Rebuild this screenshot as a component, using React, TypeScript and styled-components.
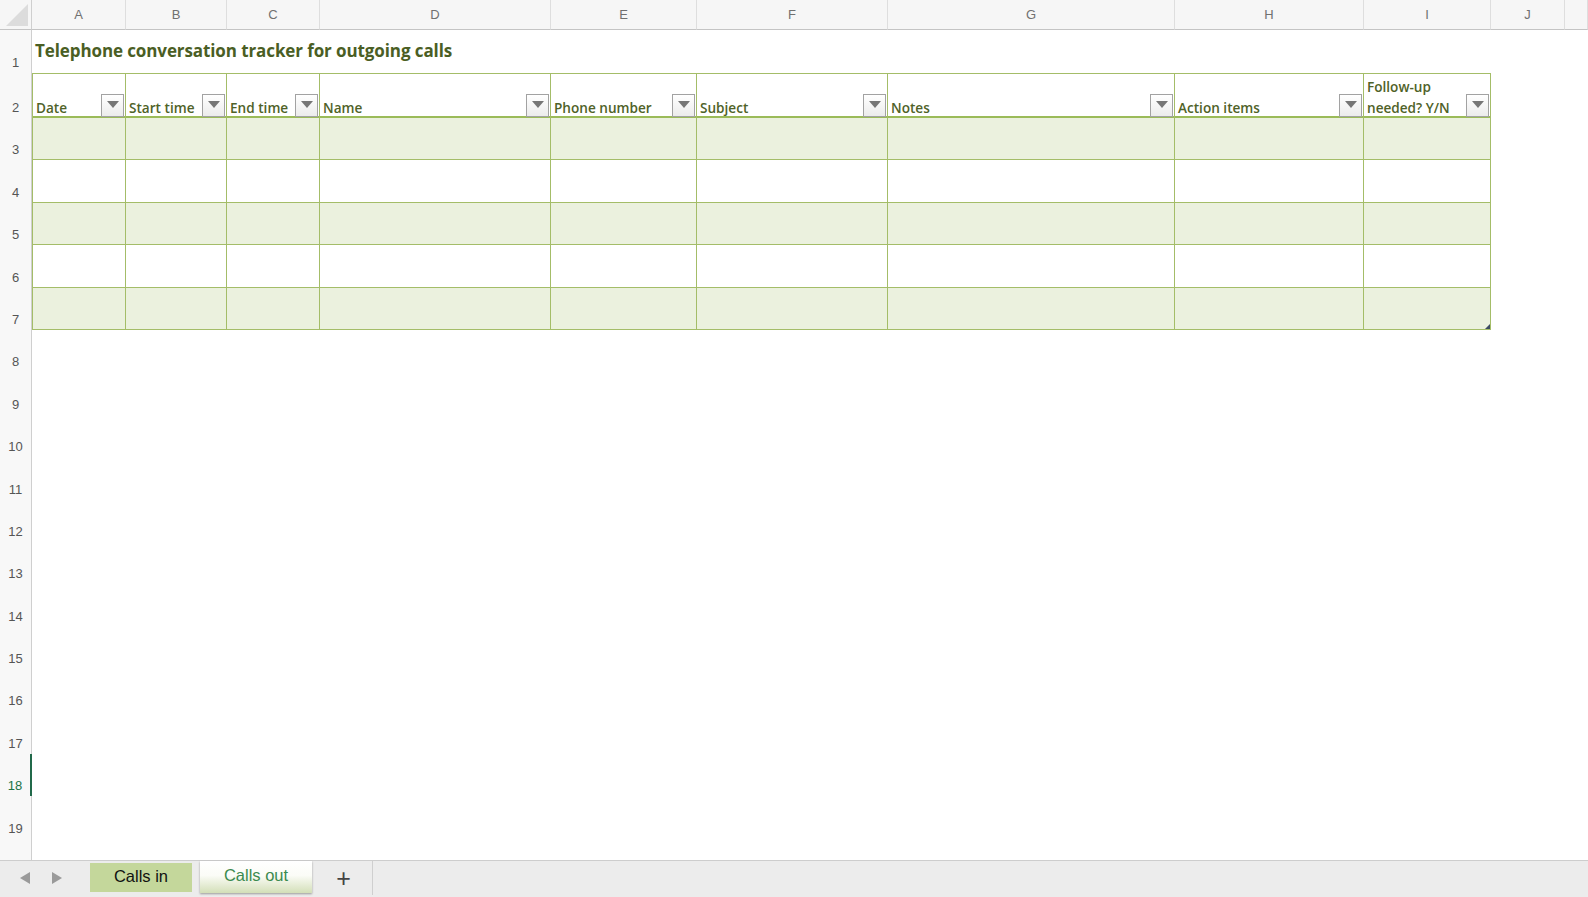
import React from 'react';
import styled, { createGlobalStyle, css } from 'styled-components';

const GlobalStyle = createGlobalStyle`
  html, body {
    margin: 0;
    padding: 0;
    background: #ffffff;
    overflow: hidden;
  }
  * {
    box-sizing: border-box;
  }
`;

const GREEN_LINE = '#a4bd68';
const GREEN_HEAD_LINE = '#9bbb59';
const BAND = '#ebf1de';
const TEXT_GREEN = '#4f6228';

const columns = [
  { letter: 'A', width: 94, label: 'Date' },
  { letter: 'B', width: 101, label: 'Start time' },
  { letter: 'C', width: 93, label: 'End time' },
  { letter: 'D', width: 231, label: 'Name' },
  { letter: 'E', width: 146, label: 'Phone number' },
  { letter: 'F', width: 191, label: 'Subject' },
  { letter: 'G', width: 287, label: 'Notes' },
  { letter: 'H', width: 189, label: 'Action items' },
  { letter: 'I', width: 127, label: 'Follow-up needed? Y/N' },
  { letter: 'J', width: 74 },
];

const gridCols = `32px ${columns.map((c) => c.width + 'px').join(' ')} 1fr`;
const dataRows = [3, 4, 5, 6, 7];
const emptyRows = Array.from({ length: 12 }, (_, i) => i + 8);

const Page = styled.div`
  width: 1588px;
  height: 897px;
  display: flex;
  flex-direction: column;
  background: #fff;
`;

const Sheet = styled.div`
  flex: 1;
  overflow: hidden;
  display: grid;
  grid-template-columns: ${gridCols};
  grid-template-rows: 30px 43px 45px repeat(17, 42.4px) 1fr;
  font-family: 'Open Sans', 'Liberation Sans', sans-serif;
`;

const Corner = styled.div`
  background: #f6f6f6;
  border-right: 1px solid #cfcfcf;
  border-bottom: 1px solid #c4c4c4;
  position: relative;
  &::after {
    content: '';
    position: absolute;
    right: 3px;
    bottom: 3px;
    width: 0;
    height: 0;
    border-left: 22px solid transparent;
    border-bottom: 22px solid #dcdcdc;
  }
`;

const ColHead = styled.div`
  background: #f6f6f6;
  border-right: 1px solid #dedede;
  border-bottom: 1px solid #c4c4c4;
  display: flex;
  align-items: center;
  justify-content: center;
  font-family: 'Liberation Sans', Arial, sans-serif;
  font-size: 13px;
  color: #707070;
`;

const RowHead = styled.div<{ $selected?: boolean }>`
  background: #f8f8f8;
  border-right: 1px solid #cfcfcf;
  display: flex;
  align-items: flex-end;
  justify-content: center;
  padding-bottom: 3px;
  font-family: 'Liberation Sans', Arial, sans-serif;
  font-size: 13px;
  color: #555;
  ${(p) =>
    p.$selected &&
    css`
      color: #217346;
      border-right: 2px solid #21694a;
    `}
`;

const Cell = styled.div`
  background: #fff;
`;

const TitleCell = styled.div`
  grid-column: 2 / span 9;
  display: flex;
  align-items: center;
  padding-left: 3px;
  padding-bottom: 2px;
  font-size: 17px;
  font-weight: 700;
  letter-spacing: -0.1px;
  color: #4a5e24;
  white-space: nowrap;
`;

const HeadCell = styled.div<{ $first?: boolean }>`
  position: relative;
  border-top: 1px solid ${GREEN_LINE};
  border-right: 1px solid ${GREEN_LINE};
  box-shadow: inset 0 -2px 0 ${GREEN_HEAD_LINE};
  ${(p) => p.$first && `border-left: 1px solid ${GREEN_LINE};`}
  display: flex;
  align-items: flex-end;
  padding: 0 26px 0 3px;
  font-size: 13.6px;
  font-weight: 600;
  line-height: 21px;
  color: ${TEXT_GREEN};
`;

const Dropdown = styled.span`
  position: absolute;
  right: 1px;
  bottom: 1px;
  width: 23px;
  height: 23px;
  border: 1px solid #a2a2a2;
  background: linear-gradient(#ffffff, #ececec);
  display: flex;
  align-items: center;
  justify-content: center;
  &::after {
    content: '';
    width: 0;
    height: 0;
    border-left: 6px solid transparent;
    border-right: 6px solid transparent;
    border-top: 7px solid #767676;
    margin-top: -2px;
  }
`;

const DataCell = styled.div<{ $band: boolean; $first?: boolean; $corner?: boolean }>`
  position: relative;
  background: ${(p) => (p.$band ? BAND : '#fff')};
  border-right: 1px solid ${GREEN_LINE};
  border-bottom: 1px solid ${GREEN_LINE};
  ${(p) => p.$first && `border-left: 1px solid ${GREEN_LINE};`}
  ${(p) =>
    p.$corner &&
    css`
      &::after {
        content: '';
        position: absolute;
        right: 0;
        bottom: 0;
        width: 0;
        height: 0;
        border-left: 5px solid transparent;
        border-bottom: 5px solid #3d4c63;
      }
    `}
`;

const TabBar = styled.div`
  height: 37px;
  flex-shrink: 0;
  background: #ececec;
  border-top: 1px solid #cdcdcd;
  display: flex;
  align-items: flex-start;
  font-family: 'Liberation Sans', Arial, sans-serif;
`;

const NavArrows = styled.div`
  width: 88px;
  height: 34px;
  display: flex;
  align-items: center;
  gap: 22px;
  padding-left: 20px;
`;

const Arrow = styled.span<{ $dir: 'left' | 'right' }>`
  width: 0;
  height: 0;
  border-top: 6px solid transparent;
  border-bottom: 6px solid transparent;
  ${(p) =>
    p.$dir === 'left'
      ? 'border-right: 10px solid #9a9a9a;'
      : 'border-left: 10px solid #9a9a9a;'}
`;

const Tab = styled.div<{ $active?: boolean }>`
  height: 29px;
  margin-top: 2px;
  margin-left: 2px;
  display: flex;
  align-items: center;
  font-size: 16.5px;
  ${(p) =>
    p.$active
      ? css`
          margin-top: 0;
          margin-left: 8px;
          height: 32px;
          padding: 0 0 4px;
          width: 112px;
          justify-content: center;
          color: #3b8a4f;
          background: linear-gradient(#ffffff 0%, #fbfcf7 45%, #d3dfb8 100%);
          box-shadow: 0 1px 2px rgba(0, 0, 0, 0.35);
        `
      : css`
          width: 102px;
          justify-content: center;
          padding-bottom: 3px;
          color: #111;
          background: #c4d79b;
        `}
`;

const AddTab = styled.div`
  width: 58px;
  height: 34px;
  margin-left: 3px;
  display: flex;
  align-items: center;
  justify-content: center;
  border-right: 1px solid #cfcfcf;
  font-size: 25px;
  color: #444;
`;

const App: React.FC = () => {
  return (
    <>
      <GlobalStyle />
      <Page>
        <Sheet>
          <Corner />
          {columns.map((c) => (
            <ColHead key={c.letter}>{c.letter}</ColHead>
          ))}
          <ColHead />

          <RowHead>1</RowHead>
          <TitleCell>Telephone conversation tracker for outgoing calls</TitleCell>
          <Cell />
          <Cell />

          <RowHead>2</RowHead>
          {columns.slice(0, 9).map((c, i) => (
            <HeadCell key={c.letter} $first={i === 0}>
              {c.label}
              <Dropdown />
            </HeadCell>
          ))}
          <Cell />
          <Cell />

          {dataRows.map((r) => (
            <React.Fragment key={r}>
              <RowHead>{r}</RowHead>
              {columns.slice(0, 9).map((c, i) => (
                <DataCell
                  key={c.letter}
                  $band={r % 2 === 1}
                  $first={i === 0}
                  $corner={r === 7 && i === 8}
                />
              ))}
              <Cell />
              <Cell />
            </React.Fragment>
          ))}

          {emptyRows.map((r) => (
            <React.Fragment key={r}>
              <RowHead $selected={r === 18}>{r}</RowHead>
              {columns.map((c) => (
                <Cell key={c.letter} />
              ))}
              <Cell />
            </React.Fragment>
          ))}
          <RowHead />
        </Sheet>
        <TabBar>
          <NavArrows>
            <Arrow $dir="left" />
            <Arrow $dir="right" />
          </NavArrows>
          <Tab>Calls in</Tab>
          <Tab $active>Calls out</Tab>
          <AddTab>+</AddTab>
        </TabBar>
      </Page>
    </>
  );
};

export default App;
